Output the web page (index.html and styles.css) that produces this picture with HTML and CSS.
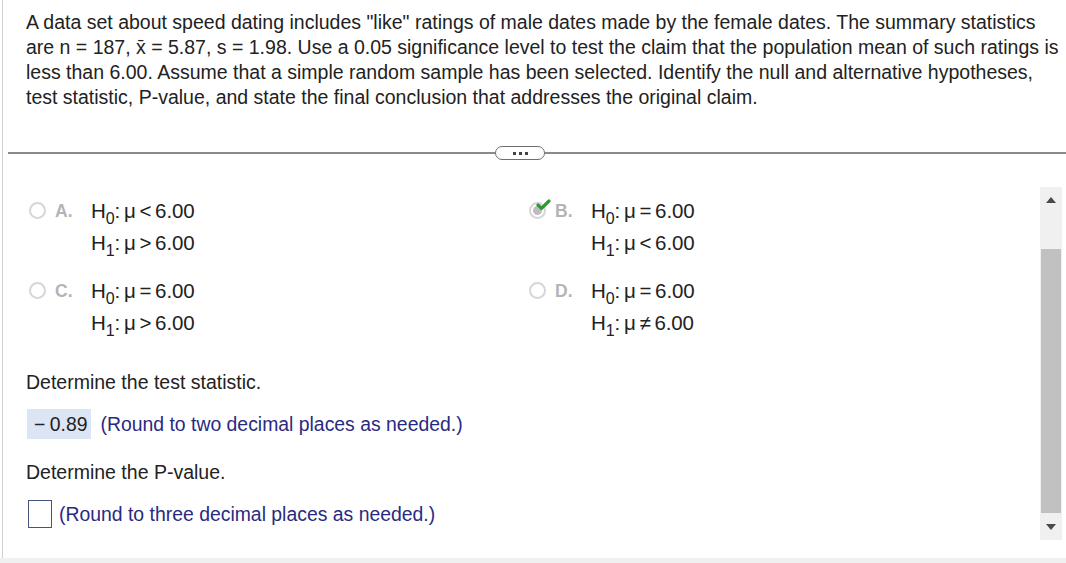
FILE: index.html
```html
<!DOCTYPE html>
<html>
<head>
<meta charset="utf-8">
<link rel="stylesheet" href="styles.css">
</head>
<body>
<div class="page">
  <p class="question">A data set about speed dating includes "like" ratings of male dates made by the female dates. The summary statistics are n = 187, x̄ = 5.87, s = 1.98. Use a 0.05 significance level to test the claim that the population mean of such ratings is less than 6.00. Assume that a simple random sample has been selected. Identify the null and alternative hypotheses, test statistic, P-value, and state the final conclusion that addresses the original claim.</p>
  <div class="divider">
    <span class="line"></span>
    <span class="pill"><i></i><i></i><i></i></span>
    <span class="line"></span>
  </div>
  <div class="work">
    <div class="main">
      <div class="options">
        <div class="option">
          <span class="radio"></span><span class="letter">A.</span>
          <div class="hyp"><div>H<sub>0</sub>: μ &lt; 6.00</div><div>H<sub>1</sub>: μ &gt; 6.00</div></div>
        </div>
        <div class="option">
          <span class="radio chosen"><svg class="check" width="15" height="12" viewBox="0 0 15 12"><path d="M2 6 L5.5 9.4 L13 2" fill="none" stroke="#2c9a2c" stroke-width="3.2" stroke-linecap="round" stroke-linejoin="round"/></svg></span><span class="letter">B.</span>
          <div class="hyp"><div>H<sub>0</sub>: μ = 6.00</div><div>H<sub>1</sub>: μ &lt; 6.00</div></div>
        </div>
        <div class="option">
          <span class="radio"></span><span class="letter">C.</span>
          <div class="hyp"><div>H<sub>0</sub>: μ = 6.00</div><div>H<sub>1</sub>: μ &gt; 6.00</div></div>
        </div>
        <div class="option">
          <span class="radio"></span><span class="letter">D.</span>
          <div class="hyp"><div>H<sub>0</sub>: μ = 6.00</div><div>H<sub>1</sub>: μ ≠ 6.00</div></div>
        </div>
      </div>
      <p class="prompt first">Determine the test statistic.</p>
      <div class="answer"><span class="filled">− 0.89</span><span class="hint">(Round to two decimal places as needed.)</span></div>
      <p class="prompt second">Determine the P-value.</p>
      <div class="answer blank"><span class="box"></span><span class="hint">(Round to three decimal places as needed.)</span></div>
    </div>
    <div class="scrollbar">
      <div class="arrow up"></div>
      <div class="thumb"></div>
      <div class="arrow down"></div>
    </div>
  </div>
  <div class="bottom"></div>
</div>
</body>
</html>
```
FILE: styles.css
```css
* { box-sizing: border-box; }
html, body { margin: 0; padding: 0; background: #fff; }
body {
  font-family: "Liberation Sans", Arial, sans-serif;
  color: #222;
  width: 1066px;
  height: 563px;
  overflow: hidden;
}
.page {
  position: relative;
  margin-left: 2px;
  border-left: 1px solid #cfcfcf;
  height: 558px;
  display: flex;
  flex-direction: column;
}
.question {
  margin: 0;
  padding: 10px 5px 0 23px;
  font-size: 19.5px;
  line-height: 25px;
}
.divider {
  margin-top: 36px;
  height: 14px;
  display: flex;
  align-items: center;
  padding-left: 5px;
}
.divider .line {
  flex: 1;
  height: 2px;
  background: #8a8a8a;
}
.divider .line:first-child { flex: 0 0 487px; }
.pill {
  width: 50px;
  height: 14px;
  border: 1px solid #6f6f6f;
  border-radius: 7px;
  display: flex;
  justify-content: center;
  align-items: center;
  gap: 3px;
  background: #fff;
}
.pill i {
  width: 3px;
  height: 3px;
  background: #444;
  display: block;
}
.work {
  flex: 1;
  display: flex;
}
.main {
  flex: 1;
  padding-left: 23px;
}
.options {
  margin-top: 35px;
  display: grid;
  grid-template-columns: 500px 495px;
  row-gap: 16px;
}
.option {
  display: flex;
  align-items: flex-start;
}
.radio {
  position: relative;
  width: 17px;
  height: 17px;
  border: 2px solid #d6d6d6;
  border-radius: 50%;
  margin: 7px 0 0 3px;
  flex: none;
}
.radio.chosen::after {
  content: "";
  position: absolute;
  left: 2px;
  top: 2px;
  width: 9px;
  height: 9px;
  border-radius: 50%;
  background: #bdbdbd;
}
.check {
  position: absolute;
  left: 5px;
  top: -5px;
  z-index: 1;
}
.letter {
  width: 45px;
  padding-left: 9px;
  font-size: 17.5px;
  font-weight: bold;
  color: #b4b4b4;
  line-height: 32px;
  flex: none;
}
.hyp {
  font-size: 20.5px;
  line-height: 32px;
  color: #222;
  letter-spacing: -0.1px;
  word-spacing: -1.8px;
}
.hyp sub {
  font-size: 16px;
  vertical-align: -6px;
  line-height: 0;
}
.prompt {
  margin: 0;
  font-size: 19.5px;
  line-height: 25px;
}
.prompt.first { margin-top: 31px; }
.prompt.second { margin-top: 21px; }
.answer {
  margin-top: 14px;
  height: 30px;
  display: flex;
  align-items: center;
  font-size: 19.4px;
}
.answer.blank { margin-top: 15px; height: 28px; }
.filled {
  background: #dce5f3;
  height: 30px;
  line-height: 30px;
  padding: 0 4px 0 7px;
  margin-left: 1px;
  color: #222;
  word-spacing: -1px;
}
.hint {
  color: #2a2a82;
  margin-left: 9px;
}
.box {
  width: 24px;
  height: 28px;
  border: 1px solid #44547a;
  margin-left: 2px;
}
.blank .hint { margin-left: 7px; }
.scrollbar {
  width: 22px;
  margin: 27px 4px 18px 0;
  background: #f0f0f0;
  display: flex;
  flex-direction: column;
  align-items: center;
}
.arrow {
  width: 0;
  height: 0;
  border-left: 5px solid transparent;
  border-right: 5px solid transparent;
}
.arrow.up {
  margin-top: 10px;
  border-bottom: 6px solid #4a4a4a;
}
.thumb {
  width: 20px;
  margin-top: 46px;
  flex: 1;
  background: #c1c1c1;
}
.arrow.down {
  margin-top: 11px;
  margin-bottom: 10px;
  border-top: 6px solid #4a4a4a;
}
.bottom {
  position: absolute;
  left: -3px;
  right: 0;
  bottom: -5px;
  height: 5px;
  background: #f0f0f0;
}
```
